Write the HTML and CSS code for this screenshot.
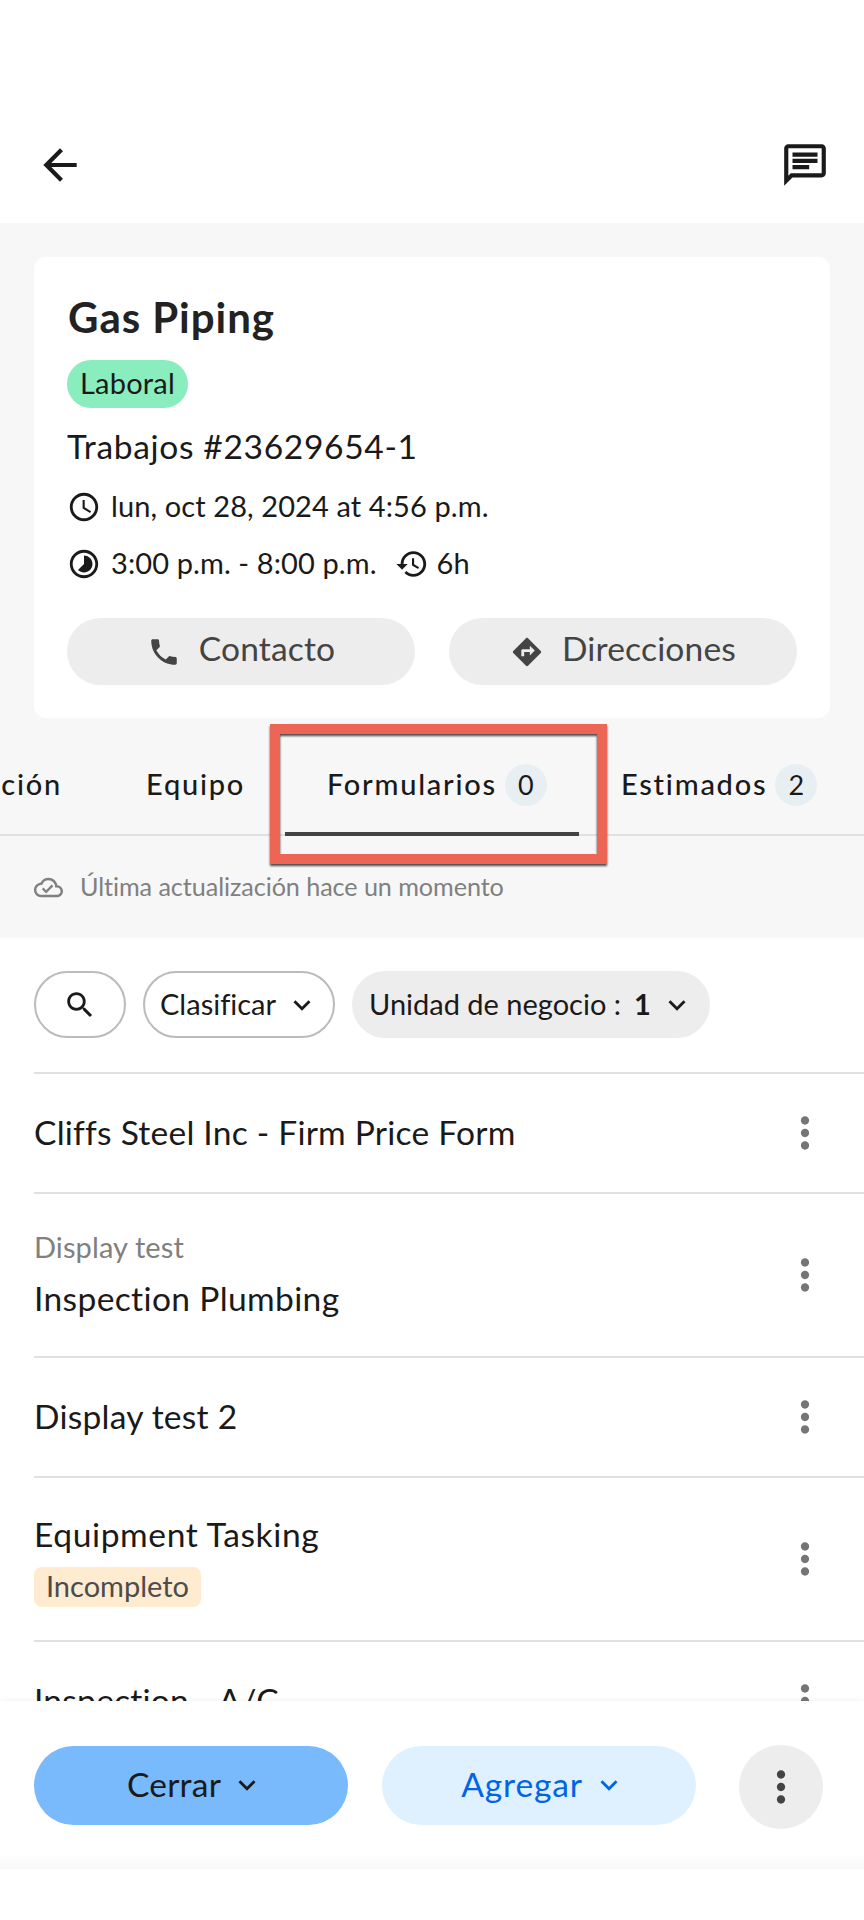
FILE: index.html
```html
<!DOCTYPE html>
<html lang="es">
  <head>
    <meta charset="utf-8">
    <title>Gas Piping</title>
    <link rel="stylesheet" href="styles.css">
  </head>
  <body>
    <svg width="0" height="0" class="sprite">
      <symbol id="i-back" viewBox="0 0 24 24"><path d="M20 11H7.83l5.59-5.59L12 4l-8 8 8 8 1.41-1.41L7.83 13H20v-2z"/></symbol>
      <symbol id="i-chat" viewBox="0 0 24 24"><path d="M4 4h16v12H5.17L4 17.17V4m0-2c-1.1 0-1.99.9-1.99 2L2 22l4-4h14c1.1 0 2-.9 2-2V4c0-1.1-.9-2-2-2H4zm2 10h8v2H6v-2zm0-3h12v2H6V9zm0-3h12v2H6V6z"/></symbol>
      <symbol id="i-clock" viewBox="0 0 24 24"><path d="M11.99 2C6.47 2 2 6.48 2 12s4.47 10 9.99 10C17.52 22 22 17.52 22 12S17.52 2 11.99 2zM12 20c-4.42 0-8-3.58-8-8s3.58-8 8-8 8 3.58 8 8-3.58 8-8 8zm.5-13H11v6l5.25 3.15.75-1.23-4.5-2.67z"/></symbol>
      <symbol id="i-lapse" viewBox="0 0 24 24"><path d="M16.24 7.76C15.07 6.59 13.54 6 12 6v6l-4.24 4.24c2.34 2.34 6.14 2.34 8.49 0 2.34-2.34 2.34-6.14-.01-8.48zM12 2C6.48 2 2 6.48 2 12s4.48 10 10 10 10-4.48 10-10S17.52 2 12 2zm0 18c-4.42 0-8-3.58-8-8s3.58-8 8-8 8 3.58 8 8-3.58 8-8 8z"/></symbol>
      <symbol id="i-history" viewBox="0 0 24 24"><path d="M13 3c-4.97 0-9 4.03-9 9H1l3.89 3.89.07.14L9 12H6c0-3.87 3.13-7 7-7s7 3.13 7 7-3.13 7-7 7c-1.93 0-3.68-.79-4.94-2.06l-1.42 1.42C8.27 19.99 10.51 21 13 21c4.97 0 9-4.03 9-9s-4.03-9-9-9zm-1 5v5l4.28 2.54.72-1.21-3.5-2.08V8H12z"/></symbol>
      <symbol id="i-phone" viewBox="0 0 24 24"><path d="M6.62 10.79c1.44 2.83 3.76 5.14 6.59 6.59l2.2-2.2c.27-.27.67-.36 1.02-.24 1.12.37 2.33.57 3.57.57.55 0 1 .45 1 1V20c0 .55-.45 1-1 1-9.39 0-17-7.61-17-17 0-.55.45-1 1-1h3.5c.55 0 1 .45 1 1 0 1.25.2 2.45.57 3.57.11.35.03.74-.25 1.02l-2.2 2.2z"/></symbol>
      <symbol id="i-directions" viewBox="0 0 24 24"><path d="M21.71 11.29l-9-9c-.39-.39-1.02-.39-1.41 0l-9 9c-.39.39-.39 1.02 0 1.41l9 9c.39.39 1.02.39 1.41 0l9-9c.39-.38.39-1.01 0-1.41zM14 14.5V12h-4v3H8v-4c0-.55.45-1 1-1h5V7.5l3.5 3.5-3.5 3.5z"/></symbol>
      <symbol id="i-cloud" viewBox="0 0 24 24"><path d="M19.35 10.04C18.67 6.59 15.64 4 12 4 9.11 4 6.6 5.64 5.35 8.04 2.34 8.36 0 10.91 0 14c0 3.31 2.69 6 6 6h13c2.76 0 5-2.24 5-5 0-2.64-2.05-4.78-4.65-4.96zM19 18H6c-2.21 0-4-1.79-4-4s1.79-4 4-4h.71C7.37 7.69 9.48 6 12 6c3.04 0 5.5 2.46 5.5 5.5v.5H19c1.66 0 3 1.34 3 3s-1.34 3-3 3zm-9-3.82l-2.09-2.09L6.5 13.5 10 17l6.01-6.01-1.41-1.41z"/></symbol>
      <symbol id="i-search" viewBox="0 0 24 24"><path d="M15.5 14h-.79l-.28-.27C15.41 12.59 16 11.11 16 9.5 16 5.91 13.09 3 9.5 3S3 5.91 3 9.5 5.91 16 9.5 16c1.61 0 3.09-.59 4.23-1.57l.27.28v.79l5 4.99L20.49 19l-4.99-5zm-6 0C7.01 14 5 11.99 5 9.5S7.01 5 9.5 5 14 7.01 14 9.5 11.99 14 9.5 14z"/></symbol>
      <symbol id="i-down" viewBox="0 0 24 24"><path d="M7.41 8.59L12 13.17l4.59-4.58L18 10l-6 6-6-6z"/></symbol>
      <symbol id="i-more" viewBox="0 0 24 24"><path d="M12 8c1.1 0 2-.9 2-2s-.9-2-2-2-2 .9-2 2 .9 2 2 2zm0 2c-1.1 0-2 .9-2 2s.9 2 2 2 2-.9 2-2-.9-2-2-2zm0 6c-1.1 0-2 .9-2 2s.9 2 2 2 2-.9 2-2-.9-2-2-2z"/></symbol>
    </svg>

    <div class="screen">
      <header class="topbar">
        <svg class="icon-lg"><use href="#i-back"/></svg>
        <svg class="icon-lg"><use href="#i-chat"/></svg>
      </header>

      <section class="summary">
        <div class="card">
          <h1>Gas Piping</h1>
          <span class="status">Laboral</span>
          <p class="job">Trabajos #23629654-1</p>
          <p class="info"><svg class="icon"><use href="#i-clock"/></svg><span>lun, oct 28, 2024 at 4:56 p.m.</span></p>
          <p class="info hours"><svg class="icon"><use href="#i-lapse"/></svg><span>3:00 p.m. - 8:00 p.m.</span><svg class="icon"><use href="#i-history"/></svg><span>6h</span></p>
          <div class="actions">
            <a class="action"><svg class="icon"><use href="#i-phone"/></svg><span>Contacto</span></a>
            <a class="action"><svg class="icon"><use href="#i-directions"/></svg><span>Direcciones</span></a>
          </div>
        </div>

        <nav class="tabs">
          <a class="tab first"><span>Información</span></a>
          <a class="tab team"><span>Equipo</span></a>
          <a class="tab active"><span>Formularios</span><b class="count">0</b></a>
          <a class="tab"><span>Estimados</span><b class="count">2</b></a>
          <div class="marker"></div>
        </nav>

        <p class="updated"><svg class="icon-sm"><use href="#i-cloud"/></svg><span>Última actualización hace un momento</span></p>
      </section>

      <div class="filters">
        <a class="chip search"><svg class="icon"><use href="#i-search"/></svg></a>
        <a class="chip"><span>Clasificar</span><svg class="icon"><use href="#i-down"/></svg></a>
        <a class="chip filled"><span>Unidad de negocio :</span><b>1</b><svg class="icon"><use href="#i-down"/></svg></a>
      </div>

      <ul class="forms">
        <li><div><p class="name">Cliffs Steel Inc - Firm Price Form</p></div><svg class="icon-lg"><use href="#i-more"/></svg></li>
        <li class="tall"><div class="grouped"><p class="group">Display test</p><p class="name">Inspection Plumbing</p></div><svg class="icon-lg"><use href="#i-more"/></svg></li>
        <li><div><p class="name">Display test 2</p></div><svg class="icon-lg"><use href="#i-more"/></svg></li>
        <li class="tall"><div class="tagged"><p class="name">Equipment Tasking</p><p class="tag">Incompleto</p></div><svg class="icon-lg"><use href="#i-more"/></svg></li>
        <li><div><p class="name">Inspection - A/C</p></div><svg class="icon-lg"><use href="#i-more"/></svg></li>
      </ul>

      <footer class="bottombar">
        <a class="btn primary"><span>Cerrar</span><svg class="icon"><use href="#i-down"/></svg></a>
        <a class="btn"><span>Agregar</span><svg class="icon"><use href="#i-down"/></svg></a>
        <a class="round"><svg class="icon-lg"><use href="#i-more"/></svg></a>
      </footer>
    </div>
  </body>
</html>
```
FILE: styles.css
```css
* { box-sizing: border-box; }
body {
  margin: 0;
  font-family: Lato, "Open Sans", sans-serif;
  font-size: 29px;
  font-variant-ligatures: none;
  color: #1a1a1a;
  background: #fff;
}
h1, p, ul { margin: 0; padding: 0; }
svg { fill: currentColor; flex: none; display: block; }
.sprite { position: absolute; }
.icon { width: 34px; height: 34px; }
.icon-sm { width: 29px; height: 29px; }
.icon-lg { width: 50px; height: 50px; }

.screen {
  width: 864px;
  height: 1920px;
  overflow: hidden;
  display: flex;
  flex-direction: column;
}
.topbar {
  height: 223px;
  padding: 140px 34px 0 35px;
  display: flex;
  align-items: flex-start;
  justify-content: space-between;
  flex: none;
}

.summary {
  background: #f7f7f7;
  height: 715px;
  padding-top: 34px;
  flex: none;
}
.card {
  margin: 0 34px;
  height: 461px;
  padding: 35px 33px 0;
  background: #fff;
  border-radius: 12px;
}
h1 {
  margin-left: 1px;
  font-size: 42px;
  line-height: 50px;
  font-weight: 700;
  letter-spacing: .95px;
  color: #222;
}
.status {
  display: block;
  width: 121px;
  height: 48px;
  margin-top: 18px;
  line-height: 46px;
  letter-spacing: .2px;
  text-align: center;
  background: #89edbe;
  border-radius: 24px;
}
.job {
  margin-top: 16px;
  font-size: 33.6px;
  line-height: 44px;
  letter-spacing: .65px;
}
.info {
  display: flex;
  align-items: center;
  height: 44px;
  margin-top: 17px;
  letter-spacing: .1px;
}
.info span { margin: -3px 0 0 10px; }
.hours { margin-top: 13px; }
.hours .icon + span + .icon { margin: 0 -2px 0 18px; }
.actions {
  display: flex;
  gap: 34px;
  margin-top: 32px;
}
.action {
  flex: 1;
  height: 67px;
  display: flex;
  align-items: center;
  justify-content: center;
  gap: 18px;
  font-size: 33.6px;
  letter-spacing: .15px;
  color: #444;
  background: #ededed;
  border-radius: 34px;
}
.action span { margin-top: -8px; }

.tabs {
  position: relative;
  display: flex;
  height: 118px;
  border-bottom: 2px solid #e0e0e0;
}
.tab {
  display: flex;
  align-items: center;
  flex: none;
  height: 118px;
  padding: 16px 0 0 42px;
  font-weight: 500;
  letter-spacing: 1.75px;
}
.tab span { margin-top: -4px; }
.tab.first { width: 104px; padding-right: 42px; justify-content: flex-end; }
.tab.team { width: 181px; }
.tab.active { width: 294px; box-shadow: inset 0 -4px #444; }
.count {
  flex: none;
  width: 42px;
  height: 42px;
  margin-left: 8px;
  line-height: 41px;
  font-size: 27px;
  font-weight: 400;
  letter-spacing: 0;
  text-align: center;
  background: #e8eff2;
  border-radius: 50%;
}
/* highlight frame over the active tab */
.marker {
  position: absolute;
  left: 270px;
  top: 6px;
  width: 337px;
  height: 140px;
  border: 10px solid #ec6555;
  filter: drop-shadow(0 2px 1px rgba(0,0,0,.7));
}
.updated {
  display: flex;
  align-items: center;
  height: 102px;
  padding: 0 0 0 34px;
  gap: 17px;
  font-size: 25.2px;
  letter-spacing: -.08px;
  color: #808080;
}
.updated span { margin-top: -3px; }

.filters {
  display: flex;
  gap: 17px;
  height: 134px;
  padding: 33px 34px 0;
  flex: none;
}
.chip {
  display: flex;
  align-items: center;
  height: 67px;
  width: 192px;
  padding: 0 14px 0 15px;
  border: 2px solid #bbb;
  border-radius: 34px;
}
.chip span, .chip b { margin-top: -3px; }
.chip .icon { margin-left: auto; }
.chip.search { width: 92px; padding: 0; }
.chip.search .icon { margin: 0 auto; }
.chip.filled { width: 358px; background: #ededed; border-color: #ededed; }
.chip b { margin-left: 13px; }

.forms {
  flex: 1;
  min-height: 0;
  overflow: hidden;
  list-style: none;
}
.forms li {
  display: flex;
  align-items: center;
  justify-content: space-between;
  height: 120px;
  margin-left: 34px;
  padding-right: 34px;
  border-top: 2px solid #e0e0e0;
}
.forms li.tall { height: 164px; }
.name {
  font-size: 33.6px;
  line-height: 44px;
  margin-top: -3px;
  letter-spacing: .22px;
}
.grouped { margin-top: -5px; }
.grouped .name { letter-spacing: .35px; }
.group { line-height: 44px; margin-bottom: 10px; letter-spacing: .1px; color: #808080; }
.tagged { margin-top: 3px; }
.tagged .name { letter-spacing: .6px; }
.tag {
  width: 167px;
  height: 40px;
  line-height: 38px;
  margin-top: 11px;
  text-align: center;
  color: #4c4c4c;
  background: #ffebcf;
  border-radius: 8px;
}
.forms .icon-lg { color: #757575; }

.bottombar {
  position: relative;
  display: flex;
  align-items: center;
  height: 168px;
  margin-bottom: 51px;
  padding: 4px 41px 0 34px;
  flex: none;
  background: linear-gradient(#fff 154px, #f7f7f7);
  box-shadow: 0 -2px 5px rgba(0,0,0,.04);
}
.btn {
  display: flex;
  align-items: center;
  justify-content: center;
  width: 314px;
  height: 79px;
  margin: -4px 34px 0 0;
  padding-left: 9px;
  gap: 9px;
  font-size: 33.6px;
  letter-spacing: .8px;
  color: #0064e4;
  background: #dff1ff;
  border-radius: 40px;
}
.btn span { margin-top: -2px; }
.btn.primary { letter-spacing: .2px; color: #1a1a1a; background: #78bafb; }
.round {
  display: flex;
  align-items: center;
  justify-content: center;
  width: 84px;
  height: 84px;
  margin-left: auto;
  color: #444;
  background: #ededed;
  border-radius: 50%;
}
```
